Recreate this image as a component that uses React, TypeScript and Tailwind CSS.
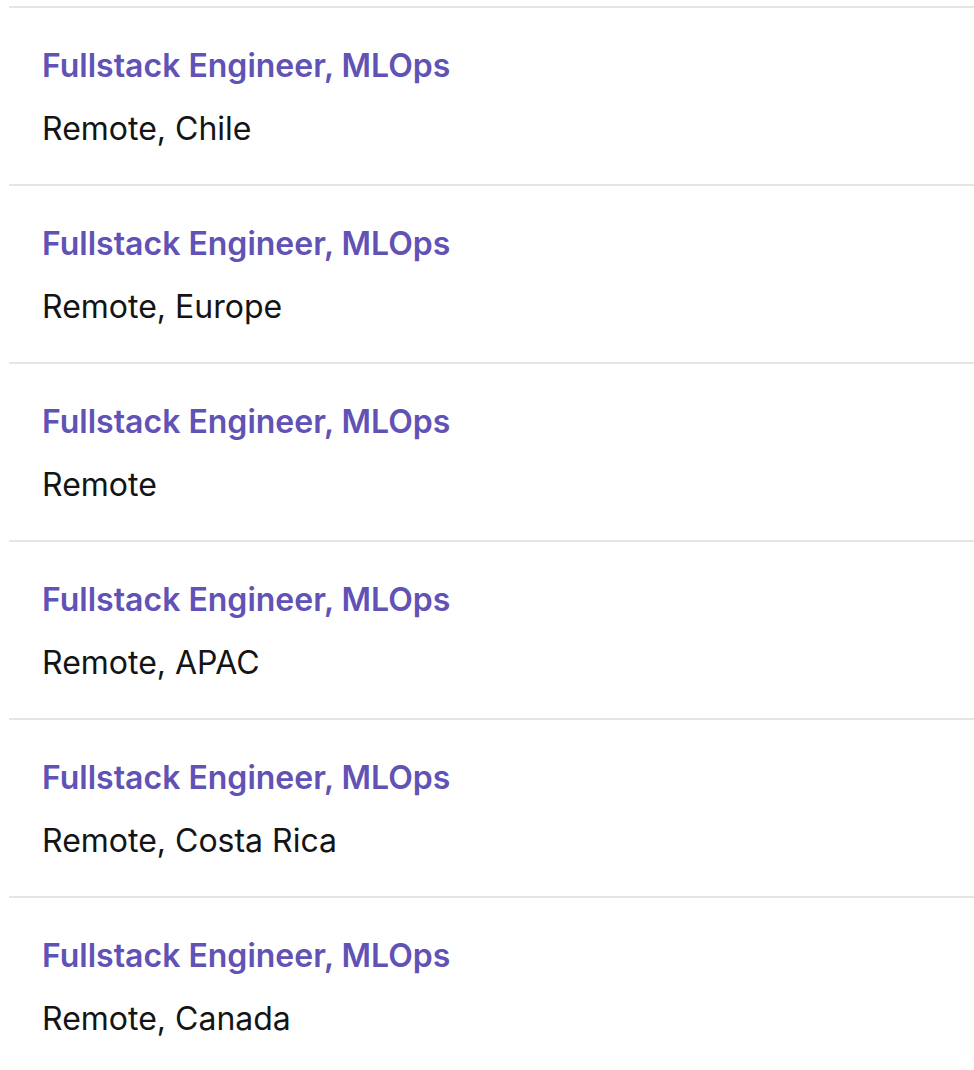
import React from "react";

const jobs = [
  "Remote, Chile",
  "Remote, Europe",
  "Remote",
  "Remote, APAC",
  "Remote, Costa Rica",
  "Remote, Canada",
];

export default function App() {
  return (
    <div className="bg-white w-[974px] h-[1070px] overflow-hidden pl-[9px] pt-[6px]" style={{ fontFamily: "Inter, 'Noto Sans', sans-serif" }}>
      {jobs.map((loc, i) => (
        <div key={i} className="border-t-2 border-[#e5e5e5] pl-[33px] h-[178px]">
          <div className="pt-[39px] text-[32px] leading-[38px] font-semibold text-[#6152b5]">Fullstack Engineer, MLOps</div>
          <div className="mt-[25px] text-[32px] leading-[38px] text-[#141414]">{loc}</div>
        </div>
      ))}
    </div>
  );
}
